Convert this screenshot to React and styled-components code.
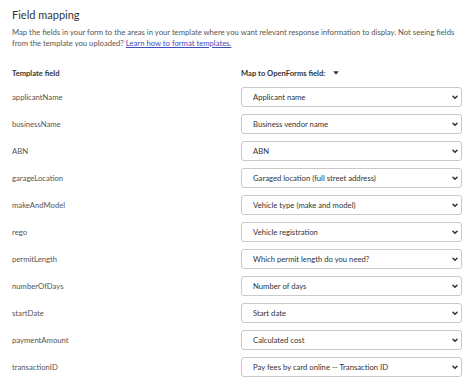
import React from "react";
import styled, { createGlobalStyle } from "styled-components";

const GlobalStyle = createGlobalStyle`
    body {
        margin: 0;
        background: #ffffff;
        font-family: "Lato", "Open Sans", sans-serif;
    }
`;

const Page = styled.div`
    width: 474px;
    height: 392px;
    box-sizing: border-box;
    padding: 8px 11px 0 12px;
    overflow: hidden;
`;

const Title = styled.h2`
    margin: 0;
    font-size: 11px;
    font-weight: 400;
    color: #333;
    line-height: 14px;
`;

const Description = styled.p`
    margin: 4.5px 0 0;
    font-size: 7.7px;
    line-height: 11px;
    color: #555;
`;

const Link = styled.a`
    color: #3d4fb8;
    text-decoration: underline;
`;

const Table = styled.div`
    margin-top: 17.5px;
    display: grid;
    grid-template-columns: 229px 221px;
    row-gap: 7px;
    align-items: center;
`;

const HeaderCell = styled.div`
    display: flex;
    align-items: center;
    gap: 8px;
    font-size: 7.6px;
    font-weight: 700;
    color: #333;
    height: 14px;
`;

const FieldName = styled.div`
    font-size: 7.7px;
    color: #555;
`;

const SelectBox = styled.div`
    height: 20px;
    box-sizing: border-box;
    border: 1px solid #c9c9c9;
    border-radius: 3px;
    display: flex;
    align-items: center;
    justify-content: space-between;
    padding: 0 3px 0 11px;
    font-size: 7.7px;
    color: #333;
    background: #fff;
`;

const Caret = () => (
    <svg width="6" height="4" viewBox="0 0 6 4">
        <path d="M0.3 0.3 L5.7 0.3 L3 3.7 Z" fill="#333" />
    </svg>
);

const Chevron = () => (
    <svg width="6" height="5" viewBox="0 0 6 5">
        <path d="M1 1.2 L3 3.3 L5 1.2" fill="none" stroke="#333" strokeWidth="1.5" strokeLinecap="round" strokeLinejoin="round" />
    </svg>
);

const rows = [
    ["applicantName", "Applicant name"],
    ["businessName", "Business vendor name"],
    ["ABN", "ABN"],
    ["garageLocation", "Garaged location (full street address)"],
    ["makeAndModel", "Vehicle type (make and model)"],
    ["rego", "Vehicle registration"],
    ["permitLength", "Which permit length do you need?"],
    ["numberOfDays", "Number of days"],
    ["startDate", "Start date"],
    ["paymentAmount", "Calculated cost"],
    ["transactionID", "Pay fees by card online -- Transaction ID"],
];

export default function App() {
    return (
        <>
            <GlobalStyle />
            <Page>
                <Title>Field mapping</Title>
                <Description>
                    Map the fields in your form to the areas in your template where you want relevant response information to display. Not seeing fields
                    from the template you uploaded? <Link href="#">Learn how to format templates.</Link>
                </Description>
                <Table>
                    <HeaderCell>Template field</HeaderCell>
                    <HeaderCell>
                        Map to OpenForms field:
                        <Caret />
                    </HeaderCell>
                    {rows.map(([field, label]) => (
                        <React.Fragment key={field}>
                            <FieldName>{field}</FieldName>
                            <SelectBox>
                                {label}
                                <Chevron />
                            </SelectBox>
                        </React.Fragment>
                    ))}
                </Table>
            </Page>
        </>
    );
}
